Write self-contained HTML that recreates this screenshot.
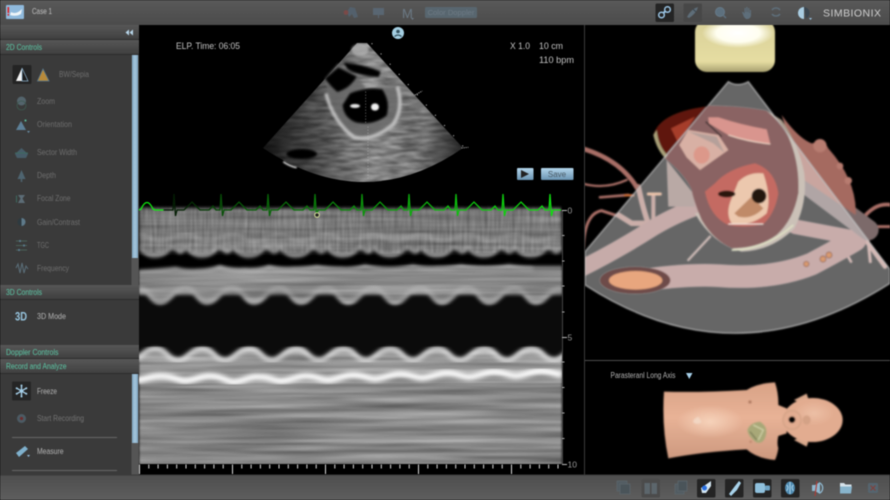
<!DOCTYPE html>
<html><head><meta charset="utf-8"><title>Simbionix</title>
<style>
html,body{margin:0;padding:0;background:#000;width:890px;height:500px;overflow:hidden}
svg{display:block;filter:blur(.4px)}
text{font-family:"Liberation Sans",sans-serif}
.g{font-size:8.6px;fill:#5cc8a6}
.l{font-size:8.6px;fill:#6e6e6e}
.b{font-size:8.6px;fill:#b4b4b4}
.w{font-size:9.4px;fill:#c4c4c4}
</style></head><body>
<svg width="890" height="500" viewBox="0 0 890 500" xmlns="http://www.w3.org/2000/svg">
<defs>
<linearGradient id="hd" x1="0" y1="0" x2="0" y2="1"><stop offset="0" stop-color="#575757"/><stop offset="1" stop-color="#3f3f3f"/></linearGradient>
<linearGradient id="tb" x1="0" y1="0" x2="0" y2="1"><stop offset="0" stop-color="#595959"/><stop offset="1" stop-color="#4b4b4b"/></linearGradient>
<linearGradient id="bt" x1="0" y1="0" x2="0" y2="1"><stop offset="0" stop-color="#4e4e4e"/><stop offset="1" stop-color="#5e5e5e"/></linearGradient>
<linearGradient id="sb" x1="0" y1="0" x2="1" y2="0"><stop offset="0" stop-color="#7fa6c2"/><stop offset=".5" stop-color="#a5c6dc"/><stop offset="1" stop-color="#7fa6c2"/></linearGradient>
<linearGradient id="btn" x1="0" y1="0" x2="0" y2="1"><stop offset="0" stop-color="#b4d6ec"/><stop offset="1" stop-color="#6a94b2"/></linearGradient>
<linearGradient id="ecg" gradientUnits="userSpaceOnUse" x1="139" y1="0" x2="562" y2="0">
<stop offset="0" stop-color="#10ee10"/><stop offset=".056" stop-color="#10ee10"/><stop offset=".06" stop-color="#031503"/><stop offset=".12" stop-color="#052a05"/><stop offset=".2" stop-color="#075007"/><stop offset=".42" stop-color="#0a7a0a"/><stop offset=".7" stop-color="#0db80d"/><stop offset="1" stop-color="#10e010"/></linearGradient>
<linearGradient id="prb" x1="0" y1="0" x2="0" y2="1"><stop offset="0" stop-color="#d8d098"/><stop offset=".8" stop-color="#e6dda2"/><stop offset="1" stop-color="#a8a070"/></linearGradient>
<linearGradient id="sec" gradientUnits="userSpaceOnUse" x1="263" y1="0" x2="463" y2="0"><stop offset="0" stop-color="#222"/><stop offset=".3" stop-color="#808080"/><stop offset=".55" stop-color="#d4d4d4"/><stop offset=".8" stop-color="#b0b0b0"/><stop offset="1" stop-color="#3a3a3a"/></linearGradient>
<linearGradient id="bod" x1="0" y1="0" x2="0" y2="1"><stop offset="0" stop-color="#d8a286"/><stop offset=".45" stop-color="#e8b296"/><stop offset="1" stop-color="#cc987e"/></linearGradient>
<radialGradient id="hl" cx=".5" cy=".5" r=".5"><stop offset="0" stop-color="#f6d2ba"/><stop offset="1" stop-color="#f6d2ba" stop-opacity="0"/></radialGradient>
<radialGradient id="pw" cx=".5" cy=".5" r=".5"><stop offset="0" stop-color="#fff"/><stop offset=".6" stop-color="#fffef0"/><stop offset="1" stop-color="#fffef0" stop-opacity="0"/></radialGradient>
<filter id="b1" x="-10%" y="-20%" width="120%" height="140%"><feGaussianBlur stdDeviation="1.500"/></filter>
<filter id="b2" x="-10%" y="-20%" width="120%" height="140%"><feGaussianBlur stdDeviation="2"/></filter>
<filter id="b3" x="-20%" y="-20%" width="140%" height="140%"><feGaussianBlur stdDeviation="3.500"/></filter>
<filter id="b4" x="-5%" y="-5%" width="110%" height="110%"><feGaussianBlur stdDeviation="2.200"/></filter>
<filter id="n1" x="0" y="0" width="100%" height="100%" color-interpolation-filters="sRGB"><feTurbulence type="fractalNoise" baseFrequency="0.006 0.16" numOctaves="3" seed="4"/><feColorMatrix values=".45 0 0 0 .3 .45 0 0 0 .3 .45 0 0 0 .3 0 0 0 0 1"/><feGaussianBlur stdDeviation="1 .5"/></filter>
<filter id="n2" x="0" y="0" width="100%" height="100%" color-interpolation-filters="sRGB"><feTurbulence type="fractalNoise" baseFrequency="0.4 0.03" numOctaves="2" seed="8"/><feColorMatrix values=".8 0 0 0 .2 .8 0 0 0 .2 .8 0 0 0 .2 0 0 0 0 1"/><feGaussianBlur stdDeviation=".5"/></filter>
<filter id="n3" x="0" y="0" width="100%" height="100%" color-interpolation-filters="sRGB"><feTurbulence type="fractalNoise" baseFrequency="0.05 0.3" numOctaves="3" seed="2"/><feColorMatrix values=".7 0 0 0 .28 .7 0 0 0 .28 .7 0 0 0 .28 0 0 0 0 1"/><feGaussianBlur stdDeviation=".8"/></filter>
<mask id="mm" maskUnits="userSpaceOnUse" x="139" y="205" width="423" height="262">
<g filter="url(#b1)">
<path fill="#ddd" d="M130 208H139V250 q8 9 17 8 q8 0 15 -8 q4 0 8 4 q4 0 7 -4 q8 9 17 8 q8 0 15 -8 q4 0 8 4 q4 0 7 -4 q8 9 17 8 q8 0 15 -8 q4 0 8 4 q4 0 7 -4 q8 9 17 8 q8 0 15 -8 q4 0 8 4 q4 0 7 -4 q8 9 17 8 q8 0 15 -8 q4 0 8 4 q4 0 7 -4 q8 9 17 8 q8 0 15 -8 q4 0 8 4 q4 0 7 -4 q8 9 17 8 q8 0 15 -8 q4 0 8 4 q4 0 7 -4 q8 9 17 8 q8 0 15 -8 q4 0 8 4 q4 0 7 -4 q8 9 17 8 q8 0 15 -8 q4 0 8 4 q4 0 7 -4 V208Z"/>
<path fill="#eee" d="M125 270 H139 q20 -1 37 -3 q10 3 22 2 q12 0 22 -4 q10 4 25 3 q14 1 24 -3 q12 3 24 2 q12 0 24 -2 q12 2 24 2 q12 1 24 -3 q12 3 24 3 q12 0 24 -3 q12 3 24 2 q12 0 24 -2 q12 2 24 2 q12 0 24 -2 q12 2 24 2 H575 V295 H125Z"/>
<path fill="#eee" d="M139 291 c8 0 12 14 21 14 c10 0 14 -14 26 -14 c8 0 12 14 21 14 c10 0 14 -14 26 -14 c8 0 12 14 21 14 c10 0 14 -14 26 -14 c8 0 12 14 21 14 c10 0 14 -14 26 -14 c8 0 12 14 21 14 c10 0 14 -14 26 -14 c8 0 12 14 21 14 c10 0 14 -14 26 -14 c8 0 12 14 21 14 c10 0 14 -14 26 -14 c8 0 12 14 21 14 c10 0 14 -14 26 -14 c8 0 12 14 21 14 c10 0 14 -14 26 -14 V270 H139Z"/>
<path fill="#fff" d="M131.500 358 c8 0 12 -11 24 -11 c12 0 12 11 23 11 c8 0 12 -11 24 -11 c12 0 12 11 23 11 c8 0 12 -11 24 -11 c12 0 12 11 23 11 c8 0 12 -11 24 -11 c12 0 12 11 23 11 c8 0 12 -11 24 -11 c12 0 12 11 23 11 c8 0 12 -11 24 -11 c12 0 12 11 23 11 c8 0 12 -11 24 -11 c12 0 12 11 23 11 c8 0 12 -11 24 -11 c12 0 12 11 23 11 c8 0 12 -11 24 -11 c12 0 12 11 23 11 c8 0 12 -11 24 -11 c12 0 12 11 23 11 V475 H131Z"/>
</g></mask>
<mask id="sm" maskUnits="userSpaceOnUse" x="255" y="35" width="215" height="155"><path fill="url(#sec)" d="M357 43 L263 148 Q365 216 463 148 L367 43Z"/></mask>
<clipPath id="mc"><rect x="139" y="205" width="423" height="260"/></clipPath>
<clipPath id="rc"><rect x="585" y="25" width="305" height="335"/></clipPath>
</defs>

<rect width="890" height="500" fill="#000"/>

<!-- top bar -->
<rect width="890" height="25" fill="url(#tb)"/>
<rect x="6" y="5" width="18" height="14" rx="1" fill="#8fb9dc"/>
<path d="M11 12 Q16 15 22 9 L21 14 Q16 17 10 15Z" fill="#eef4f8"/>
<rect x="7.500" y="7" width="1.600" height="6" fill="#e02020"/><rect x="7.500" y="14" width="1.600" height="1.600" fill="#e02020"/>
<text x="32" y="14" textLength="20" lengthAdjust="spacingAndGlyphs" style="font-size:8.600px;fill:#c0c0c0">Case 1</text>
<!-- center dim -->
<path d="M350 7l5 1 3 9-4 1-2-4-3 3-2-5z" fill="#53606c"/><circle cx="346" cy="12.500" r="2.400" fill="#7a4a48"/>
<rect x="373" y="8" width="11" height="7" fill="#596672"/><path d="M378.500 15v3" stroke="#596672"/>
<text x="402" y="18" style="font-size:13px;fill:#6c7a86">M</text><path d="M411 18l3 0-1.500 2z" fill="#6c7a86"/>
<rect x="425" y="7" width="52" height="11" rx="1.500" fill="#58666f"/>
<text x="451" y="15" text-anchor="middle" style="font-size:7.600px;fill:#6e7b85">Color Doppler</text>
<!-- right top icons -->
<rect x="655.500" y="3.500" width="18.500" height="18.500" rx="1.500" fill="#242424"/>
<rect x="683.500" y="3.500" width="18.500" height="18.500" rx="1.500" fill="#474747"/>
<g fill="none" stroke="#9ac4e4" stroke-width="1.500"><circle cx="667.500" cy="9.500" r="2.800"/><circle cx="661.500" cy="15" r="2.800"/><path d="M663.500 13l2-2" stroke-width="2"/></g>
<path d="M687 17 Q691 9 698 7 L697 10 Q694 15 689 18Z" fill="#5e6d78"/><path d="M693 9l3 3" stroke="#3c4750"/>
<circle cx="720" cy="12" r="4.500" fill="#5d707e" stroke="#677a88"/><path d="M723 15l3 3" stroke="#5d707e" stroke-width="1.500"/>
<path d="M744 17l-2-5 1.500 0 1 2v-6h1.200v4h.6v-5h1.200v5h.6v-4h1.200v5h.5v-3h1.200v5q0 3-3 4h-2z" fill="#5e6e7a"/>
<path d="M772 10a5 5 0 0 1 8 0M780 14a5 5 0 0 1-8 0" fill="none" stroke="#5e6e7a" stroke-width="1.600"/>
<path d="M804 7a6 6 0 0 0 0 12z" fill="#a9cde2"/><path d="M804 7a6 6 0 0 1 2 11.500z" fill="#3a4650"/><path d="M809 18l3 0-1.500 2z" fill="#9ac4e4"/>
<text x="823" y="16.500" textLength="58" lengthAdjust="spacing" style="font-size:10.500px;fill:#cfcfcf">SIMBIONIX</text>

<!-- left panel -->
<rect x="0" y="25" width="139" height="450" fill="#3a3a3a"/>
<rect x="0" y="25" width="139" height="15" fill="url(#hd)"/><path d="M0 39.500H139" stroke="#2c2c2c"/>
<path d="M129 29.500v6l-3.500-3zM133 29.500v6l-3.500-3z" fill="#b8d6ea"/>
<rect x="0" y="40" width="139" height="14" fill="url(#hd)"/><path d="M0 54.500H139" stroke="#2c2c2c"/>
<text x="6" y="50" class="g" textLength="36" lengthAdjust="spacingAndGlyphs">2D Controls</text>
<rect x="131.500" y="55" width="7" height="230" fill="#555"/><rect x="132" y="55" width="6" height="203" fill="url(#sb)"/>
<rect x="12.500" y="65" width="19" height="19" rx="1.500" fill="#242424"/>
<path d="M22 68 L16 81 H22Z" fill="#f4f4f4"/><path d="M22 68 L28 81 H22Z" fill="#1c1c1c" stroke="#8fb4d0" stroke-width=".7"/>
<path d="M43 69 L37.500 81 H49Z" fill="#b88a3a" stroke="#5a7a90" stroke-width=".8"/>
<text x="59" y="77" class="l" textLength="30" lengthAdjust="spacingAndGlyphs">BW/Sepia</text>
<circle cx="21.500" cy="101" r="4.500" fill="#54646c"/><circle cx="21.500" cy="105.500" r="4.500" fill="none" stroke="#3e5a50" stroke-width=".8"/>
<text x="37" y="104" class="l" textLength="18" lengthAdjust="spacingAndGlyphs">Zoom</text>
<path d="M21 121 L16 130 H26Z" fill="#5d8098"/><circle cx="25.500" cy="120.500" r="1" fill="#5cc8a6"/><path d="M27 131h3l-1.500 2z" fill="#6a90a8"/>
<text x="37" y="127" class="l" textLength="35" lengthAdjust="spacingAndGlyphs">Orientation</text>
<path d="M21.500 148 L15 154 L17 158 H26 L28 154Z" fill="#465c68"/><path d="M15 153H28" stroke="#3e6a60"/>
<text x="37" y="155" class="l" textLength="40" lengthAdjust="spacingAndGlyphs">Sector Width</text>
<path d="M21.500 170 L17.500 179 H25.500Z" fill="#4e6470"/><path d="M21.500 179v3" stroke="#4e6470" stroke-width="1.500"/>
<text x="37" y="178" class="l" textLength="19" lengthAdjust="spacingAndGlyphs">Depth</text>
<path d="M18 195H25L22.500 198.500 25 203H18L20.500 198.500Z" fill="#5c6c76"/><path d="M16.500 195.500v7" stroke="#3e6a60"/>
<text x="37" y="201" class="l" textLength="33.500" lengthAdjust="spacingAndGlyphs">Focal Zone</text>
<circle cx="21.500" cy="222" r="4" fill="#2e3a40"/><path d="M21.500 218a4 4 0 0 1 0 8z" fill="#5f7a8a"/>
<text x="37" y="225" class="l" textLength="43" lengthAdjust="spacingAndGlyphs">Gain/Contrast</text>
<path d="M16 241H27M16 245.500H27M16 250H27" stroke="#4a6258"/><path d="M20 240v2M24 244.500v2M19 249v2" stroke="#5d8098" stroke-width="1.500"/>
<text x="37" y="248" class="l" textLength="12" lengthAdjust="spacingAndGlyphs">TGC</text>
<path d="M16 268l2-4 2 9 2-10 2 10 2-7 2 3" fill="none" stroke="#5b6f7a"/>
<text x="37" y="271" class="l" textLength="32" lengthAdjust="spacingAndGlyphs">Frequency</text>

<rect x="0" y="285" width="139" height="14" fill="url(#hd)"/><path d="M0 299.500H139" stroke="#2c2c2c"/>
<text x="6" y="295" class="g" textLength="36" lengthAdjust="spacingAndGlyphs">3D Controls</text>
<text x="15" y="320.500" textLength="12" lengthAdjust="spacingAndGlyphs" style="font-size:12px;font-weight:bold;fill:#98c6e0">3D</text>
<text x="37" y="319" class="b" textLength="29" lengthAdjust="spacingAndGlyphs">3D Mode</text>

<rect x="0" y="345" width="139" height="14" fill="url(#hd)"/><path d="M0 358.500H139" stroke="#2c2c2c"/>
<text x="6" y="355" class="g" textLength="52.500" lengthAdjust="spacingAndGlyphs">Doppler Controls</text>
<rect x="0" y="359" width="139" height="15" fill="url(#hd)"/><path d="M0 373.500H139" stroke="#2c2c2c"/>
<text x="6" y="369" class="g" textLength="60.500" lengthAdjust="spacingAndGlyphs">Record and Analyze</text>
<rect x="131.500" y="374" width="7" height="101" fill="#555"/><rect x="132" y="374" width="6" height="69" fill="url(#sb)"/>
<rect x="12" y="381.500" width="19" height="19" rx="1.500" fill="#252525"/>
<g stroke="#a6cfe8" stroke-width="1.400"><path d="M21.500 385.500v11M16.700 388.200l9.600 5.600M26.300 388.200l-9.600 5.600"/></g><g fill="#a6cfe8"><circle cx="21.500" cy="391" r="1.800"/><circle cx="21.500" cy="385.500" r="1"/><circle cx="21.500" cy="396.500" r="1"/><circle cx="16.700" cy="388.200" r="1"/><circle cx="26.300" cy="388.200" r="1"/><circle cx="16.700" cy="393.800" r="1"/><circle cx="26.300" cy="393.800" r="1"/></g>
<text x="37" y="394" class="b" textLength="20" lengthAdjust="spacingAndGlyphs">Freeze</text>
<circle cx="21.500" cy="418.500" r="4.500" fill="#4c5b64"/><circle cx="21.500" cy="418.500" r="1.600" fill="#6e2c2c"/>
<text x="37" y="421" class="l" style="fill:#737373" textLength="47" lengthAdjust="spacingAndGlyphs">Start Recording</text>
<path d="M12 437.500H117M12 470.500H117" stroke="#666"/>
<path d="M16 453 L25 446 L28 449 L19 457Z" fill="#7fb0cc"/><path d="M27 455h3l-1.500 2z" fill="#9ac4e4"/>
<text x="37" y="454" class="b" textLength="26.500" lengthAdjust="spacingAndGlyphs">Measure</text>

<!-- center labels -->
<text x="176" y="49" class="w" textLength="64" lengthAdjust="spacingAndGlyphs">ELP. Time: 06:05</text>
<text x="510" y="49" class="w" textLength="20" lengthAdjust="spacingAndGlyphs">X 1.0</text><text x="539" y="49" class="w" textLength="24" lengthAdjust="spacingAndGlyphs">10 cm</text>
<text x="539" y="63" class="w" textLength="35" lengthAdjust="spacingAndGlyphs">110 bpm</text>
<circle cx="398" cy="33" r="6" fill="#a5cfe2"/><circle cx="398" cy="31.500" r="1.800" fill="#33505e"/><path d="M394.500 36.500q3.500-3 7 0" fill="none" stroke="#33505e" stroke-width="1.200"/>

<!-- ultrasound sector -->
<rect x="255" y="35" width="215" height="155" filter="url(#n3)" mask="url(#sm)"/>
<g transform="translate(250 30) scale(.3333)">
<ellipse cx="330" cy="60" rx="26" ry="18" fill="#bbb" filter="url(#b3)" opacity=".7"/>
<path d="M225 145 L265 100 L320 140 Q345 170 345 175 L440 170 Q465 240 420 295 Q360 340 300 310 Q240 250 225 145Z" fill="#6a6a6a" opacity=".85" filter="url(#b3)"/>
<path d="M228 190 Q250 275 312 322 Q370 335 430 282 Q462 235 442 170" fill="none" stroke="#c8c8c8" stroke-width="11" opacity=".85" filter="url(#b3)"/>
<g fill="#000" filter="url(#b3)">
<path d="M300 190 Q350 170 397 178 Q422 215 410 257 Q370 287 320 278 Q281 264 278 225Z"/>
<path d="M265 112 L320 140 Q300 175 262 186 Q243 170 225 146Z"/>
<path d="M280 98 Q340 103 392 125 L386 141 Q320 137 292 116Z"/>
<ellipse cx="155" cy="372" rx="46" ry="15"/>
</g>
<ellipse cx="315" cy="228" rx="15" ry="6" fill="#e8e8e8" filter="url(#b2)"/><ellipse cx="375" cy="231" rx="12" ry="11" fill="#f0f0f0" filter="url(#b2)"/>
<path d="M100 395 Q118 408 140 413" stroke="#ddd" stroke-width="5" fill="none" filter="url(#b2)"/>
<path d="M347 185V280M354 290V445" stroke="#ccc" stroke-width="1.500" stroke-dasharray="3 6"/>
<path d="M365 40L640 350" stroke="#ccc" stroke-width="3" stroke-dasharray="3 38" fill="none"/>
<path d="M495 195l22-12M635 354l20-2" stroke="#ddd" stroke-width="2.500" stroke-dasharray="3 3"/>
</g>
<rect x="517" y="168" width="16.500" height="12" rx="1" fill="url(#btn)"/><path d="M521 170v8l8-4z" fill="#222"/>
<rect x="541" y="168" width="32.500" height="12" rx="1" fill="url(#btn)"/>
<text x="557" y="177" text-anchor="middle" style="font-size:8px;fill:#4a5a66">Save</text>

<!-- M-mode -->
<rect x="139" y="210" width="423" height="255" fill="#0b0b0b"/>
<rect x="139" y="255" width="423" height="15" fill="#000"/>
<g mask="url(#mm)">
<rect x="139" y="205" width="423" height="262" filter="url(#n1)"/>
<rect x="139" y="205" width="423" height="48" filter="url(#n2)" opacity=".3"/>
<rect x="139" y="345" width="423" height="38" fill="#fff" opacity=".14"/>
<rect x="139" y="270" width="423" height="36" fill="#fff" opacity=".1"/>
</g>
<g clip-path="url(#mc)" fill="none">
<path d="M139 234 c8 0 12 8 24 7 c8 -2 12 -5 23 -7 c8 0 12 8 24 7 c8 -2 12 -5 23 -7 c8 0 12 8 24 7 c8 -2 12 -5 23 -7 c8 0 12 8 24 7 c8 -2 12 -5 23 -7 c8 0 12 8 24 7 c8 -2 12 -5 23 -7 c8 0 12 8 24 7 c8 -2 12 -5 23 -7 c8 0 12 8 24 7 c8 -2 12 -5 23 -7 c8 0 12 8 24 7 c8 -2 12 -5 23 -7 c8 0 12 8 24 7 c8 -2 12 -5 23 -7" stroke="#eee" stroke-width="3" opacity=".25" filter="url(#b2)"/>
<path d="M139 247 q8 9 17 8 q8 0 15 -8 q4 0 8 4 q4 0 7 -4 q8 9 17 8 q8 0 15 -8 q4 0 8 4 q4 0 7 -4 q8 9 17 8 q8 0 15 -8 q4 0 8 4 q4 0 7 -4 q8 9 17 8 q8 0 15 -8 q4 0 8 4 q4 0 7 -4 q8 9 17 8 q8 0 15 -8 q4 0 8 4 q4 0 7 -4 q8 9 17 8 q8 0 15 -8 q4 0 8 4 q4 0 7 -4 q8 9 17 8 q8 0 15 -8 q4 0 8 4 q4 0 7 -4 q8 9 17 8 q8 0 15 -8 q4 0 8 4 q4 0 7 -4 q8 9 17 8 q8 0 15 -8 q4 0 8 4 q4 0 7 -4" stroke="#ddd" stroke-width="3" opacity=".3" filter="url(#b2)"/>
<path d="M139 272 q20 -1 37 -3 q10 3 22 2 q12 0 22 -4 q10 4 25 3 q14 1 24 -3 q12 3 24 2 q12 0 24 -2 q12 2 24 2 q12 1 24 -3 q12 3 24 3 q12 0 24 -3 q12 3 24 2 q12 0 24 -2 q12 2 24 2 q12 0 24 -2 q12 2 24 2" stroke="#e8e8e8" stroke-width="3" opacity=".4" filter="url(#b2)"/>
<path d="M139 288 c8 0 12 14 21 14 c10 0 14 -14 26 -14 c8 0 12 14 21 14 c10 0 14 -14 26 -14 c8 0 12 14 21 14 c10 0 14 -14 26 -14 c8 0 12 14 21 14 c10 0 14 -14 26 -14 c8 0 12 14 21 14 c10 0 14 -14 26 -14 c8 0 12 14 21 14 c10 0 14 -14 26 -14 c8 0 12 14 21 14 c10 0 14 -14 26 -14 c8 0 12 14 21 14 c10 0 14 -14 26 -14 c8 0 12 14 21 14 c10 0 14 -14 26 -14" stroke="#ddd" stroke-width="5" opacity=".3" filter="url(#b2)"/>
<path d="M131.500 360 c8 0 12 -11 24 -11 c12 0 12 11 23 11 c8 0 12 -11 24 -11 c12 0 12 11 23 11 c8 0 12 -11 24 -11 c12 0 12 11 23 11 c8 0 12 -11 24 -11 c12 0 12 11 23 11 c8 0 12 -11 24 -11 c12 0 12 11 23 11 c8 0 12 -11 24 -11 c12 0 12 11 23 11 c8 0 12 -11 24 -11 c12 0 12 11 23 11 c8 0 12 -11 24 -11 c12 0 12 11 23 11 c8 0 12 -11 24 -11 c12 0 12 11 23 11 c8 0 12 -11 24 -11 c12 0 12 11 23 11" stroke="#f4f4f4" stroke-width="5" opacity=".7" filter="url(#b2)"/>
<path d="M131 381 c10 0 18 -5 29 -5 c12 0 14 3 24 5 c10 0 16 -5 25 -5 c12 0 14 4 24 6 c10 0 16 -6 26 -5 c12 0 12 3 21 4 c10 0 16 -5 26 -5 c10 0 12 3 21 4 c10 0 16 -5 26 -5 c10 0 12 3 21 4 c10 0 16 -5 26 -5 c10 0 12 3 21 4 c10 0 16 -5 26 -5 c10 0 12 3 21 4 c10 0 16 -5 26 -5 c10 0 12 3 21 4 c10 0 16 -5 26 -5 c10 0 12 3 21 4" stroke="#fff" stroke-width="6" filter="url(#b2)"/>
</g>
<!-- ECG -->
<path d="M139 210 L141 209 Q147 196 153 209 L155 210 H163" fill="none" stroke="#10ee10" stroke-width="1.300"/>
<path d="M163 210 H173 l1 -16 l1.500 22 l1.500 -6 h7 l8 -8 l8 8 h9 l4 -4 l3 4 h4 l1 -16 l1.500 22 l1.500 -6 h7 l8 -8 l8 8 h9 l4 -4 l3 4 h4 l1 -16 l1.500 22 l1.500 -6 h7 l8 -8 l8 8 h9 l4 -4 l3 4 h4 l1 -16 l1.500 22 l1.500 -6 h7 l8 -8 l8 8 h9 l4 -4 l3 4 h4 l1 -16 l1.500 22 l1.500 -6 h7 l8 -8 l8 8 h9 l4 -4 l3 4 h4 l1 -16 l1.500 22 l1.500 -6 h7 l8 -8 l8 8 h9 l4 -4 l3 4 h4 l1 -16 l1.500 22 l1.500 -6 h7 l8 -8 l8 8 h9 l4 -4 l3 4 h4 l1 -16 l1.500 22 l1.500 -6 h7 l8 -8 l8 8 h9 l4 -4 l3 4 h4 l1 -16 l1.500 22 l1.500 -6 h8" fill="none" stroke="url(#ecg)" stroke-width="1.300"/>
<circle cx="317" cy="215" r="2.300" fill="#222" stroke="#dfe8a0"/>
<!-- axis -->
<path d="M562.500 210V465" stroke="#444"/>
<path d="M562 210.500h5M562 337.500h5M562 464.500h5" stroke="#bbb"/>
<path d="M562 235.500h2.500M562 261h2.500M562 286h2.500M562 312h2.500M562 362h2.500M562 387.500h2.500M562 413h2.500M562 438.500h2.500" stroke="#aaa"/>
<text x="567.500" y="213.500" style="font-size:8.500px;fill:#999">0</text>
<text x="567.500" y="340.500" style="font-size:8.500px;fill:#999">5</text>
<text x="567.500" y="467.500" style="font-size:8.500px;fill:#999">10</text>
<!-- ruler -->
<rect x="139" y="464" width="423" height="11" fill="#000"/>
<path d="M139 466.500H562" stroke="#ddd" stroke-width="4" stroke-dasharray="1 8.300"/>
<path d="M139.500 465V474M232.500 465V474M325.500 465V474M418.500 465V474M511.500 465V474" stroke="#ddd"/>

<!-- divider -->
<rect x="584" y="25" width="1" height="450" fill="#3c3c3c"/>

<!-- 3D -->
<g clip-path="url(#rc)">
<rect x="695" y="20" width="80" height="52" rx="12" fill="url(#prb)" style="filter:blur(.6px)"/>
<ellipse cx="738" cy="33" rx="36" ry="15" fill="url(#pw)"/>
<g transform="translate(585 80) scale(.3333)" filter="url(#b4)">
<g fill="none" stroke-linecap="round">
<path d="M-10 205 Q110 240 160 330" stroke="#a86e66" stroke-width="14"/>
<path d="M-10 310 Q60 330 125 300" stroke="#a86e66" stroke-width="7"/>
<path d="M45 352 L130 345" stroke="#a86e66" stroke-width="8"/>
<path d="M120 346h25" stroke="#c86a30" stroke-width="7"/>
<path d="M-5 500 Q0 400 50 392 L105 410" stroke="#a86e66" stroke-width="9"/>
<path d="M830 420 Q870 365 920 375" stroke="#a86e66" stroke-width="11"/>
<path d="M850 440 H920" stroke="#a86e66" stroke-width="9"/>
<path d="M820 450 L900 560" stroke="#b88a84" stroke-width="13"/>
<path d="M848 470 L856 545" stroke="#b88a84" stroke-width="9"/>
<path d="M770 495 L798 545" stroke="#b88a84" stroke-width="8"/>
<path d="M310 540 L375 470" stroke="#a88880" stroke-width="7"/>
<path d="M160 320 Q175 390 190 430 L140 430 L100 405" stroke="#a87870" stroke-width="16"/>
<path d="M205 345 V430" stroke="#a87870" stroke-width="12"/>
<path d="M190 342 h36" stroke="#dd9a70" stroke-width="9"/>
<path d="M-10 565 Q100 510 210 440 Q280 400 340 380" stroke="#a07470" stroke-width="50"/>
<path d="M150 605 Q290 582 400 587 Q560 600 680 552 Q760 510 810 480" stroke="#a47672" stroke-width="68"/>
<path d="M650 300 L850 450" stroke="#7c6a6a" stroke-width="62"/>
<path d="M630 440 L790 470" stroke="#a47672" stroke-width="44"/>
</g>
<path d="M590 105 Q640 175 680 190 Q720 180 730 205 Q770 250 790 295 Q815 350 812 405 L650 295Z" fill="#a56a60"/>
<circle cx="705" cy="197" r="20" fill="#b77b70"/><circle cx="765" cy="258" r="10" fill="#b77b70"/><circle cx="790" cy="302" r="11" fill="#b77b70"/>
<path d="M205 165 Q225 95 375 78 L245 240 Q215 205 205 165Z" fill="#5e160c"/>
<path d="M205 165 Q215 210 245 240 L250 228 Q220 200 215 150Z" fill="#a8a078"/>
<path d="M258 145 L330 110 L280 190Z" fill="#a63d2a"/>
<path d="M330 400 Q380 490 470 515 Q560 512 628 445 Q668 370 658 280 Q640 190 590 120 L545 92 Q640 200 640 340Z" fill="#a89888"/>
<path d="M245 240 L325 340 L330 380 L250 380Z" fill="#8a706a"/>
<path d="M430 5 Q458 22 490 5 L915 568 V610 Q450 907 0 615 V515Z" fill="#fff" fill-opacity=".4" stroke="#c0c0c0" stroke-width="3"/>
<path d="M370 76 Q480 78 545 92 Q590 130 610 170 Q645 250 640 340 Q625 420 575 465 Q520 505 440 505 Q385 480 350 420 Q325 360 320 330 Q300 285 240 235Z" fill="#8a6463"/>
<path d="M440 510 Q540 510 625 435" fill="none" stroke="#dfe0c4" stroke-width="5"/>
<path d="M370 112 L400 112 Q470 135 545 148 L556 192 Q480 185 430 165 L372 130Z" fill="#d9958e"/>
<path d="M430 165 Q490 185 556 192" fill="none" stroke="#f0d8c8" stroke-width="3"/>
<path d="M362 125 L410 170" stroke="#4a3838" stroke-width="5"/>
<path d="M283 195 L310 150 L400 165 L430 210 L345 270 L305 232Z" fill="#d8b0a4"/>
<path d="M310 155 L395 170 L418 218 L385 190Z" fill="#b5a09a"/>
<ellipse cx="350" cy="225" rx="24" ry="26" fill="#dc988a"/>
<path d="M390 310 Q430 265 510 250 Q570 270 580 340 Q570 400 535 432 Q480 445 430 435 Q375 410 360 335Z" fill="#c46a62"/>
<path d="M460 305 Q490 275 535 280 Q560 350 545 400 Q500 440 440 430 Q420 400 440 355Z" fill="#ecc8ae"/>
<path d="M448 400 L500 350 L535 385 Q500 420 460 410Z" fill="#c08a68"/>
<ellipse cx="425" cy="342" rx="26" ry="10" fill="#2a1410"/>
<circle cx="522" cy="348" r="22" fill="#241210"/>
<path d="M430 432 L535 432" stroke="#f4ece4" stroke-width="3"/>
<ellipse cx="150" cy="601" rx="106" ry="41" fill="#6e4c48"/>
<ellipse cx="152" cy="601" rx="80" ry="28" fill="#e8a67e"/>
<g fill="#d89a70" stroke="#8a5a48" stroke-width="2"><circle cx="664" cy="552" r="8"/><circle cx="714" cy="537" r="9"/><circle cx="732" cy="525" r="9"/></g>
</g>
</g>

<path d="M585 360.500H890" stroke="#4c4c4c"/>
<text x="610.500" y="378" textLength="65" lengthAdjust="spacingAndGlyphs" style="font-size:8px;fill:#b4b4b4">Parasteranl Long Axis</text>
<path d="M686 373h6.500l-3.250 6z" fill="#a6cfe8"/>

<!-- torso -->
<g transform="translate(590 350) scale(.3333)" filter="url(#b4)">
<path d="M612 150 L650 131 L655 146 L625 156Z M612 270 L650 290 L655 276 L625 264Z" fill="#d8a88c"/>
<path d="M222 125 Q330 128 470 120 Q500 100 555 97 Q566 130 565 165 L590 175 V250 L565 258 Q560 280 565 295 Q562 315 555 330 Q500 325 470 298 Q340 305 235 325 Q215 230 222 125Z" fill="url(#bod)"/>
<ellipse cx="668" cy="210" rx="90" ry="66" fill="#e2ac90"/>
<ellipse cx="360" cy="215" rx="100" ry="50" fill="url(#hl)"/>
<ellipse cx="672" cy="190" rx="60" ry="36" fill="url(#hl)" opacity=".5"/>
<ellipse cx="606" cy="210" rx="27" ry="28" fill="none" stroke="#d6a488" stroke-width="5"/>
<circle cx="606" cy="209" r="10" fill="#000"/>
<ellipse cx="650" cy="210" rx="12" ry="14" fill="#d4a286"/>
<circle cx="480" cy="156" r="5" fill="#b07a60"/><circle cx="482" cy="275" r="4" fill="#c08a70"/>
<path d="M325 200 q-18 8 -15 18 q15 8 25 -2z" fill="#f2d6c2"/>
<path d="M472 240 Q480 218 510 215 Q535 230 528 255 Q522 282 500 278 Q475 262 472 240Z" fill="#a8a878"/>
<path d="M490 225 L520 240 L505 270" fill="none" stroke="#d8d8b0" stroke-width="3"/>
<path d="M480 245 L500 270" stroke="#6a6a48" stroke-width="3"/>
</g>

<!-- bottom bar -->
<rect x="0" y="475" width="890" height="25" fill="url(#bt)"/>
<path d="M0 475H890" stroke="#3a3a3a"/>
<g fill="#525c62" stroke="#5c666c" stroke-width=".8">
<rect x="617" y="481" width="10" height="10"/><rect x="620" y="484" width="10" height="10" fill="#4a5459"/>
</g>
<rect x="641.500" y="479" width="18.500" height="18.500" rx="1.500" fill="#4b4b4b"/>
<rect x="644.500" y="483" width="5.500" height="11" fill="#5c666c"/><rect x="651.500" y="483" width="5.500" height="11" fill="#5c666c"/>
<g fill="#525c62" stroke="#5c666c" stroke-width=".8">
<rect x="675" y="484" width="9" height="10"/><rect x="678" y="481" width="9" height="10" fill="#4a5459"/>
</g>
<rect x="697" y="479" width="18.500" height="18.500" rx="1.500" fill="#242424"/>
<path d="M701 488 L711 481 L711 486 L706 493 L702 493Z" fill="#d4e6f2"/><circle cx="704.500" cy="488" r="2.500" fill="#2a6fe0"/>
<rect x="725" y="479" width="18.500" height="18.500" rx="1.500" fill="#242424"/>
<path d="M729 494 L735 486 L739 481 L741 483 L737 490 L731 496Z" fill="#a8d2ea"/>
<rect x="753" y="479" width="18.500" height="18.500" rx="1.500" fill="#242424"/>
<rect x="755" y="483" width="10" height="10" rx="2" fill="#8fc0dc"/><rect x="765" y="485.500" width="5" height="5" rx="1" fill="#6fa4c4"/>
<rect x="781" y="479" width="18.500" height="18.500" rx="1.500" fill="#242424"/>
<ellipse cx="790" cy="488" rx="5" ry="6.500" fill="#4f8ab0"/><path d="M790 482v12M786.500 485q3 2 0 6M793.500 485q-3 2 0 6" stroke="#a8d2ea" fill="none"/>
<path d="M812 485h3l5-3v12l-5-3h-3z" fill="#8fb8d0"/><path d="M820 483a6 6 0 0 1 0 10" fill="none" stroke="#8fb8d0" stroke-width="1.300"/><path d="M817 481l-2 15" stroke="#b03a34" stroke-width="1.100"/>
<path d="M840 483h4l1.500 1.500h6v2h-11.500z" fill="#d6e2ea"/><path d="M840 486.500h12l-1 7h-11z" fill="#88b4cc"/>
<rect x="868" y="483" width="10" height="10" rx="1.500" fill="#55656f"/><path d="M870.500 485.500l5 5M875.500 485.500l-5 5" stroke="#80403c" stroke-width="1.200"/>
</svg>
</body></html>
